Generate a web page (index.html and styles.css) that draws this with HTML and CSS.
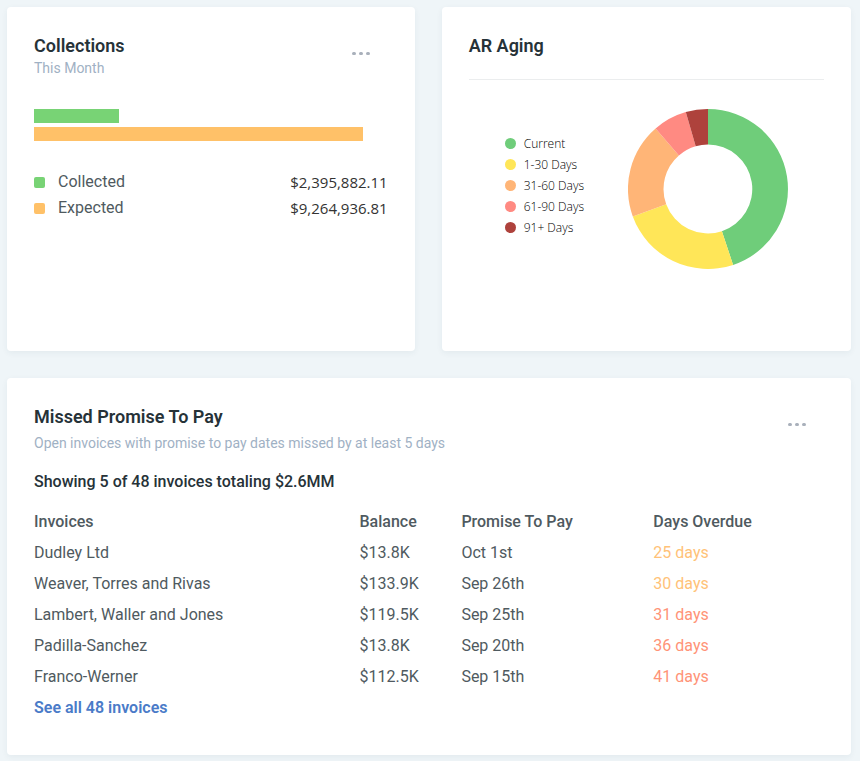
FILE: index.html
```html
<!DOCTYPE html>
<html lang="en">
<head>
    <meta charset="utf-8">
    <meta name="viewport" content="width=device-width, initial-scale=1">
    <title>Receivables</title>
    <link rel="stylesheet" href="styles.css">
</head>
<body>
    <main class="dashboard">
        <!-- Collections -->
        <section class="card">
            <header class="card-header">
                <div>
                    <h2 class="card-title">Collections</h2>
                    <p class="card-subtitle">This Month</p>
                </div>
                <button class="menu-button" type="button" aria-label="Collections menu">
                    <svg width="18" height="4" viewBox="0 0 18 4"><rect width="4" height="3" rx="1.5"/><rect x="7" width="4" height="3" rx="1.5"/><rect x="14" width="4" height="3" rx="1.5"/></svg>
                </button>
            </header>

            <div class="bars">
                <div class="bar collected" style="width: 24%"></div>
                <div class="bar expected" style="width: 93%"></div>
            </div>

            <dl class="totals">
                <div class="total-row">
                    <dt><span class="swatch collected"></span>Collected</dt>
                    <dd>$2,395,882.11</dd>
                </div>
                <div class="total-row">
                    <dt><span class="swatch expected"></span>Expected</dt>
                    <dd>$9,264,936.81</dd>
                </div>
            </dl>
        </section>

        <!-- AR Aging -->
        <section class="card">
            <header class="card-header divided">
                <h2 class="card-title">AR Aging</h2>
            </header>

            <div class="aging">
                <ul class="legend">
                    <li><span class="dot current"></span>Current</li>
                    <li><span class="dot days-30"></span>1-30 Days</li>
                    <li><span class="dot days-60"></span>31-60 Days</li>
                    <li><span class="dot days-90"></span>61-90 Days</li>
                    <li><span class="dot days-91"></span>91+ Days</li>
                </ul>
                <svg class="donut" viewBox="-80 -80 160 160" role="img" aria-label="AR aging by days">
                    <path fill="#6fcd7a" d="M0-80A80 80 0 0 1 25.1 75.95L13.9 42.2A44.5 44.5 0 0 0 0-44.5Z"/>
                    <path fill="#ffe658" d="M25.1 75.95A80 80 0 0 1-75.2 27.4L-41.8 15.2A44.5 44.5 0 0 0 13.9 42.2Z"/>
                    <path fill="#ffb577" d="M-75.2 27.4A80 80 0 0 1-52.4-60.5L-29.1-33.6A44.5 44.5 0 0 0-41.8 15.2Z"/>
                    <path fill="#ff8a82" d="M-52.4-60.5A80 80 0 0 1-22.2-76.9L-12.3-42.8A44.5 44.5 0 0 0-29.1-33.6Z"/>
                    <path fill="#ae423c" d="M-22.2-76.9A80 80 0 0 1 0-80L0-44.5A44.5 44.5 0 0 0-12.3-42.8Z"/>
                </svg>
            </div>
        </section>

        <!-- Missed Promise To Pay -->
        <section class="card wide">
            <header class="card-header">
                <div>
                    <h2 class="card-title">Missed Promise To Pay</h2>
                    <p class="card-subtitle spaced">Open invoices with promise to pay dates missed by at least 5 days</p>
                </div>
                <button class="menu-button" type="button" aria-label="Missed promise to pay menu">
                    <svg width="18" height="4" viewBox="0 0 18 4"><rect width="4" height="3" rx="1.5"/><rect x="7" width="4" height="3" rx="1.5"/><rect x="14" width="4" height="3" rx="1.5"/></svg>
                </button>
            </header>

            <p class="summary">Showing 5 of 48 invoices totaling $2.6MM</p>

            <table class="invoices">
                <thead>
                    <tr>
                        <th class="col-invoice">Invoices</th>
                        <th class="col-balance">Balance</th>
                        <th class="col-promise">Promise To Pay</th>
                        <th>Days Overdue</th>
                    </tr>
                </thead>
                <tbody>
                    <tr><td>Dudley Ltd</td><td>$13.8K</td><td>Oct 1st</td><td class="late">25 days</td></tr>
                    <tr><td>Weaver, Torres and Rivas</td><td>$133.9K</td><td>Sep 26th</td><td class="late">30 days</td></tr>
                    <tr><td>Lambert, Waller and Jones</td><td>$119.5K</td><td>Sep 25th</td><td class="very-late">31 days</td></tr>
                    <tr><td>Padilla-Sanchez</td><td>$13.8K</td><td>Sep 20th</td><td class="very-late">36 days</td></tr>
                    <tr><td>Franco-Werner</td><td>$112.5K</td><td>Sep 15th</td><td class="very-late">41 days</td></tr>
                </tbody>
            </table>
            <a class="see-all" href="#">See all 48 invoices</a>
        </section>
    </main>
</body>
</html>
```

FILE: styles.css
```css
* {
    box-sizing: border-box;
}

body {
    margin: 0;
    background: #eff5f8;
    color: #4f5a60;
    font-family: Roboto, "Liberation Sans", sans-serif;
    font-size: 16px;
}

h2, p, dl, dd, ul {
    margin: 0;
    padding: 0;
}

.dashboard {
    display: grid;
    grid-template-columns: 1fr 1fr;
    gap: 27px;
    padding: 7px 9px 6px 7px;
}

.card {
    min-height: 344px;
    padding: 27px;
    background: #fff;
    border-radius: 4px;
    box-shadow: 0 2px 6px rgba(40, 70, 90, 0.06);
}

.wide {
    grid-column: 1 / -1;
    min-height: 377px;
}

.card-header {
    display: flex;
    justify-content: space-between;
    align-items: flex-start;
}

.divided {
    padding-bottom: 21px;
    border-bottom: 1px solid #ebedee;
}

.card-title {
    color: #263238;
    font-size: 18px;
    font-weight: 600;
    line-height: 24px;
}

.card-subtitle {
    color: #9fb1c4;
    font-size: 14px;
    line-height: 20px;
}

.spaced {
    margin-top: 4px;
}

.menu-button {
    display: flex;
    padding: 18px 18px 8px;
    border: 0;
    background: none;
    fill: #a9b0bb;
    cursor: pointer;
}

/* Collections */
.bars {
    display: grid;
    gap: 4px;
    margin-top: 31px;
}

.bar {
    height: 14px;
}

.collected {
    background: #78d375;
}

.expected {
    background: #ffc168;
}

.totals {
    margin-top: 28px;
}

.total-row {
    display: flex;
    justify-content: space-between;
    line-height: 26px;
}

.total-row dt {
    display: flex;
    align-items: center;
}

.total-row dd {
    color: #333;
    font-family: "Open Sans", "Noto Sans", sans-serif;
    font-size: 15px;
}

.swatch {
    width: 11px;
    height: 11px;
    margin-right: 13px;
    border-radius: 2px;
}

/* AR Aging */
.aging {
    display: flex;
    align-items: center;
    gap: 44px;
    padding: 29px 36px 0;
}

.legend {
    padding-bottom: 8px;
    color: #000;
    font-family: "Open Sans", "Noto Sans", sans-serif;
    font-size: 12px;
    font-weight: 300;
    line-height: 21px;
    list-style: none;
    white-space: nowrap;
}

.legend li {
    display: flex;
    align-items: center;
}

.dot {
    width: 11px;
    height: 11px;
    margin-right: 8px;
    border-radius: 50%;
}

.current { background: #6fcd7a; }
.days-30 { background: #ffe658; }
.days-60 { background: #ffb577; }
.days-90 { background: #ff8a82; }
.days-91 { background: #ae423c; }

.donut {
    width: 160px;
    height: 160px;
}

/* Missed Promise To Pay */
.summary {
    margin-top: 17px;
    color: #263238;
    font-weight: 500;
    line-height: 24px;
}

.invoices {
    width: 100%;
    margin-top: 12px;
    border-collapse: collapse;
    table-layout: fixed;
}

.invoices th,
.invoices td {
    padding: 0;
    line-height: 31px;
    text-align: left;
}

.invoices th {
    font-weight: 500;
}

.col-invoice { width: 41.2%; }
.col-balance { width: 12.9%; }
.col-promise { width: 24.3%; }

.invoices .late { color: #ffc278; }
.invoices .very-late { color: #ff9377; }

.see-all {
    color: #4a7bc8;
    font-weight: 600;
    line-height: 31px;
    text-decoration: none;
}
```
